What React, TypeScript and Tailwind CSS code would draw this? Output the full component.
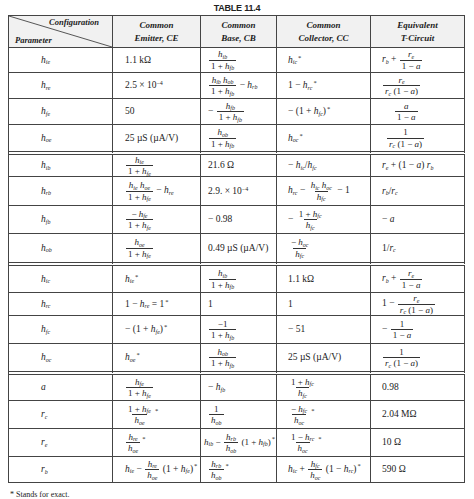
import type { ReactNode } from 'react';

// small math helpers
const V = ({ n, s }: { n: string; s?: string }) => (
  <span className="italic">
    {n}
    {s && <sub className="text-[6px] italic">{s}</sub>}
  </span>
);

const Frac = ({ num, den }: { num: ReactNode; den: ReactNode }) => (
  <span className="inline-flex flex-col items-center align-middle text-[9px] leading-[10.5px] mx-[1px]">
    <span className="px-[2px]">{num}</span>
    <span className="border-t border-[#333] px-[2px]">{den}</span>
  </span>
);

const St = () => <sup className="text-[6.5px] ml-[1px]">*</sup>;
const h = (s: string) => <V n="h" s={s} />;
const r = (s: string) => <V n="r" s={s} />;
const a = <span className="italic">a</span>;
const oneMinusA = <>1 − {a}</>;
const rc1a = <>{r('c')} (1 − {a})</>;

type Row = { p: ReactNode; cells: ReactNode[]; hc: string; last?: boolean };

const rows: Row[] = [
  { p: h('ie'), hc: 'h-[25px]', cells: ['1.1 kΩ', <Frac num={h('ib')} den={<>1 + {h('fb')}</>} />, <>{h('ic')}<St /></>, <>{r('b')} + <Frac num={r('e')} den={oneMinusA} /></>] },
  { p: h('re'), hc: 'h-[26px]', cells: [<>2.5 × 10<sup className="text-[6px]">−4</sup></>, <><Frac num={<>{h('ib')} {h('ob')}</>} den={<>1 + {h('fb')}</>} /> − {h('rb')}</>, <>1 − {h('rc')}<St /></>, <Frac num={r('e')} den={rc1a} />] },
  { p: h('fe'), hc: 'h-[26px]', cells: ['50', <>− <Frac num={h('fb')} den={<>1 + {h('fb')}</>} /></>, <>− (1 + {h('fc')})<St /></>, <span className="pl-[12px]"><Frac num={a} den={oneMinusA} /></span>] },
  { p: h('oe'), hc: 'h-[30px]', last: true, cells: ['25 µS (µA/V)', <Frac num={h('ob')} den={<>1 + {h('fb')}</>} />, <>{h('oc')}<St /></>, <span className="pl-[4px]"><Frac num="1" den={rc1a} /></span>] },
  { p: h('ib'), hc: 'h-[22px]', cells: [<Frac num={h('ie')} den={<>1 + {h('fe')}</>} />, '21.6 Ω', <>− {h('ic')}/{h('fc')}</>, <>{r('e')} + (1 − {a}) {r('b')}</>] },
  { p: h('rb'), hc: 'h-[29px]', cells: [<><Frac num={<>{h('ie')} {h('oe')}</>} den={<>1 + {h('fe')}</>} /> − {h('re')}</>, <>2.9. × 10<sup className="text-[6px]">−4</sup></>, <>{h('rc')} − <Frac num={<>{h('ic')} {h('oc')}</>} den={h('fc')} /> − 1</>, <>{r('b')}/{r('c')}</>] },
  { p: h('fb'), hc: 'h-[28px]', cells: [<Frac num={<>− {h('fe')}</>} den={<>1 + {h('fe')}</>} />, '− 0.98', <>− <Frac num={<>1 + {h('fc')}</>} den={h('fc')} /></>, <>− {a}</>] },
  { p: h('ob'), hc: 'h-[32px]', last: true, cells: [<Frac num={h('oe')} den={<>1 + {h('fe')}</>} />, '0.49 µS (µA/V)', <Frac num={<>− {h('oc')}</>} den={h('fc')} />, <>1/{r('c')}</>] },
  { p: h('ic'), hc: 'h-[27px]', cells: [<>{h('ie')}<St /></>, <Frac num={h('ib')} den={<>1 + {h('fb')}</>} />, '1.1 kΩ', <>{r('b')} + <Frac num={r('e')} den={<>1 − {a}</>} /></>] },
  { p: h('rc'), hc: 'h-[23px]', cells: [<>1 − {h('re')} = 1<St /></>, '1', '1', <>1 − <Frac num={r('e')} den={rc1a} /></>] },
  { p: h('fc'), hc: 'h-[28px]', cells: [<>− (1 + {h('fe')})<St /></>, <Frac num="−1" den={<>1 + {h('fb')}</>} />, '− 51', <>− <Frac num="1" den={oneMinusA} /></>] },
  { p: h('oc'), hc: 'h-[31px]', last: true, cells: [<>{h('oe')}<St /></>, <Frac num={h('ob')} den={<>1 + {h('fb')}</>} />, '25 µS (µA/V)', <Frac num="1" den={rc1a} />] },
  { p: a, hc: 'h-[26px]', cells: [<Frac num={h('fe')} den={<>1 + {h('fe')}</>} />, <>− {h('fb')}</>, <Frac num={<>1 + {h('fc')}</>} den={h('fc')} />, '0.98'] },
  { p: r('c'), hc: 'h-[28px]', cells: [<><Frac num={<>1 + {h('fe')}</>} den={h('oe')} /><St /></>, <Frac num="1" den={h('ob')} />, <><Frac num={<>− {h('fc')}</>} den={h('oc')} /><St /></>, '2.04 MΩ'] },
  { p: r('e'), hc: 'h-[28px]', cells: [<><Frac num={h('re')} den={h('oe')} /><St /></>, <span className="-ml-[4px] text-[9px]">{h('ib')} − <Frac num={h('rb')} den={h('ob')} /> (1 + {h('fb')})<St /></span>, <><Frac num={<>1 − {h('rc')}</>} den={h('oc')} /><St /></>, '10 Ω'] },
  { p: r('b'), hc: 'h-[26px]', cells: [<>{h('ie')} − <Frac num={h('re')} den={h('oe')} /> (1 + {h('fe')})<St /></>, <><Frac num={h('rb')} den={h('ob')} /><St /></>, <>{h('ic')} + <Frac num={h('fc')} den={h('oc')} /> (1 − {h('rc')})<St /></>, '590 Ω'] },
];

const pads = ['pl-[12px]', 'pl-[7px]', 'pl-[11px]', 'pl-[11px]'];

export default function App() {
  return (
    <div className="w-[474px] h-[499px] bg-white text-[#222] font-['Liberation_Serif',serif] overflow-hidden">
      <div className="h-[15px] flex items-center justify-center font-['Liberation_Sans',sans-serif] font-bold text-[9px] pt-[2px] tracking-tight">
        TABLE 11.4
      </div>

      <div className="ml-[8px] w-[457px] grid grid-cols-[104px_88px_76px_94px_94px] border-l border-t border-[#444] text-[9.5px]">
        {/* header */}
        <div className="relative h-[32px] border-r border-b border-[#444] bg-[#f1f1f1] font-bold italic text-[8.5px]">
          <svg className="absolute inset-0" width="103" height="31" viewBox="0 0 103 31">
            <line x1="0" y1="0" x2="103" y2="31" stroke="#444" strokeWidth="0.9" />
          </svg>
          <span className="absolute left-[40px] top-[0px]">Configuration</span>
          <span className="absolute left-[6px] top-[18px]">Parameter</span>
        </div>
        {[['Common', 'Emitter, CE'], ['Common', 'Base, CB'], ['Common', 'Collector, CC'], ['Equivalent', 'T-Circuit']].map(([l1, l2]) => (
          <div key={l2} className="h-[32px] border-r border-b border-[#444] bg-[#f1f1f1] flex flex-col items-center justify-center font-bold italic text-[9px] leading-[13px]">
            <span>{l1}</span>
            <span>{l2}</span>
          </div>
        ))}

        {rows.map((row, i) => {
          const bb = row.last ? 'border-b-[4px] border-double' : 'border-b';
          return [
            <div key={`p${i}`} className={`${row.hc} ${bb} border-r border-[#444] flex items-center pl-[32px]`}>
              {row.p}
            </div>,
            ...row.cells.map((c, j) => (
              <div key={`c${i}-${j}`} className={`${row.hc} ${bb} ${pads[j]} border-r border-[#444] flex items-center whitespace-nowrap`}>
                <span>{c}</span>
              </div>
            )),
          ];
        })}
      </div>

      <div className="ml-[10px] mt-[6px] text-[8px]">* Stands for exact.</div>
    </div>
  );
}
